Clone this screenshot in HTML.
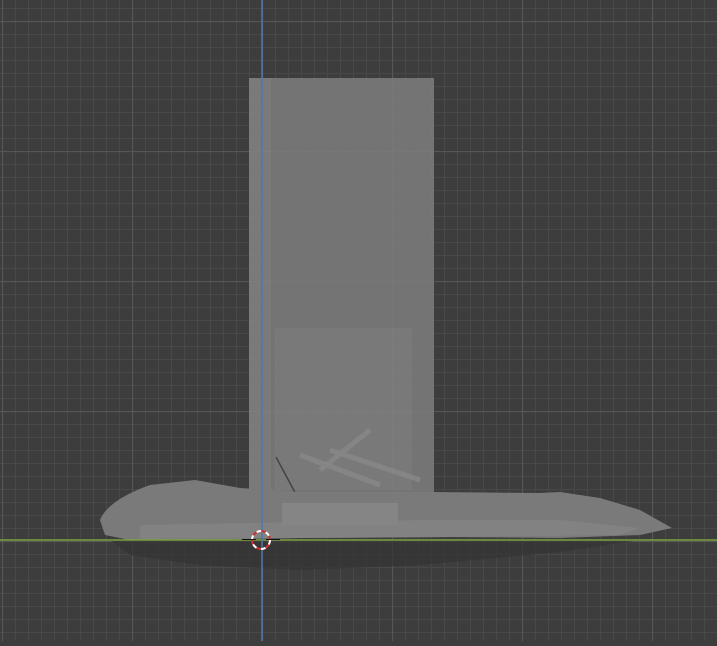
<!DOCTYPE html>
<html><head><style>html,body{margin:0;padding:0;background:#3d3d3d;overflow:hidden}</style></head>
<body>
<svg width="717" height="641" xmlns="http://www.w3.org/2000/svg">
<defs>
<pattern id="mn" x="2" y="8" width="13" height="13" patternUnits="userSpaceOnUse">
<path d="M0 0.5H13M0.5 0V13" stroke="#484848" stroke-width="1"/>
</pattern>
<pattern id="mj" x="2" y="21" width="130" height="130" patternUnits="userSpaceOnUse">
<path d="M0 0.5H130M0.5 0V130" stroke="#565656" stroke-width="1.2"/>
</pattern>
</defs>
<rect width="717" height="641" fill="#3d3d3d"/>
<rect width="717" height="641" fill="url(#mn)"/>
<rect width="717" height="641" fill="url(#mj)"/>
<path d="M110 540 L130 555 L200 565 L300 570 L420 565 L560 552 L640 540 Z" fill="#333" opacity="0.7"/>
<g opacity="0.88">
<rect x="249" y="78" width="185" height="420" fill="#7c7c7c"/>
<rect x="249" y="78" width="22" height="420" fill="#838383"/>
<rect x="275" y="328" width="137" height="162" fill="#828282"/>
</g>
<g stroke="#8e8e8e" stroke-width="5" opacity="0.6">
<line x1="300" y1="455" x2="380" y2="485"/>
<line x1="320" y1="470" x2="370" y2="430"/>
<line x1="330" y1="450" x2="420" y2="480"/>
</g>
<line x1="276" y1="457" x2="298" y2="498" stroke="#444" stroke-width="1.5"/>
<path d="M100 520 Q108 500 150 485 L195 480 L240 488 L300 492 L430 492 L540 493 L560 492 L600 498 L640 510 L672 528 L640 535 L560 538 L450 537 L300 538 L200 540 L130 540 L105 535 Z" fill="#7a7a7a"/>
<path d="M140 525 L300 522 L430 520 L560 520 L640 528 L620 535 L450 537 L300 538 L140 539 Z" fill="#828282"/>
<rect x="282" y="503" width="116" height="22" fill="#858585"/>
<line x1="0" y1="540" x2="717" y2="540" stroke="#7ea23d" stroke-width="1.5"/>
<line x1="262" y1="0" x2="262" y2="641" stroke="#4d78a8" stroke-width="1.5"/>
<circle cx="261" cy="540" r="9" fill="none" stroke="#c33" stroke-width="2"/>
<circle cx="261" cy="540" r="9" fill="none" stroke="#fff" stroke-width="2" stroke-dasharray="4.7 4.7"/>
<line x1="242" y1="539.5" x2="256" y2="539.5" stroke="#111" stroke-width="1"/>
<line x1="266" y1="539.5" x2="280" y2="539.5" stroke="#111" stroke-width="1"/>
</svg>
</body></html>
